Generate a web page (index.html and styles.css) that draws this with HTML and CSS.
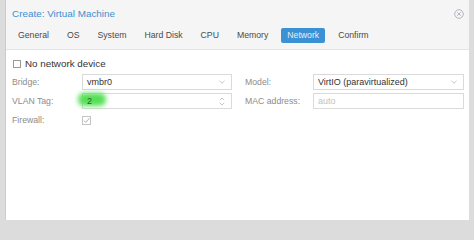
FILE: index.html
```html
<!DOCTYPE html>
<html>
<head>
<meta charset="utf-8">
<link rel="stylesheet" href="styles.css">
</head>
<body>
<div class="dialog">
  <div class="header">
    <div class="title-bar">
      <span class="title">Create: Virtual Machine</span>
      <svg class="close" width="10" height="10" viewBox="0 0 10 10">
        <circle cx="5" cy="5" r="4.3" fill="none" stroke="#a9b0b8" stroke-width="0.9"/>
        <path d="M3.3 3.3 L6.7 6.7 M6.7 3.3 L3.3 6.7" stroke="#a9b0b8" stroke-width="0.9" fill="none"/>
      </svg>
    </div>
    <div class="tabs">
      <span class="tab">General</span>
      <span class="tab">OS</span>
      <span class="tab">System</span>
      <span class="tab">Hard Disk</span>
      <span class="tab">CPU</span>
      <span class="tab">Memory</span>
      <span class="tab active">Network</span>
      <span class="tab">Confirm</span>
    </div>
  </div>
  <div class="content">
    <div class="nodev">
      <span class="cb"></span>
      <span class="nodev-label">No network device</span>
    </div>
    <div class="form">
      <div class="col left">
        <div class="row">
          <span class="label">Bridge:</span>
          <div class="field">
            <span class="value">vmbr0</span>
            <svg class="chev" width="6" height="4" viewBox="0 0 6 4"><path d="M0.5 0.8 L3 3.2 L5.5 0.8" fill="none" stroke="#b8b8b8" stroke-width="0.8"/></svg>
          </div>
        </div>
        <div class="row">
          <span class="label">VLAN Tag:</span>
          <div class="field">
            <span class="glow"></span>
            <span class="value vlan">2</span>
            <svg class="spin" width="6" height="9" viewBox="0 0 6 9"><path d="M0.8 3.2 L3 1 L5.2 3.2 M0.8 5.8 L3 8 L5.2 5.8" fill="none" stroke="#b8b8b8" stroke-width="0.8"/></svg>
          </div>
        </div>
        <div class="row">
          <span class="label">Firewall:</span>
          <span class="cb checked">
            <svg width="7" height="7" viewBox="0 0 7 7"><path d="M1 3.6 L2.8 5.4 L6.4 1.2" fill="none" stroke="#a8a8a8" stroke-width="0.9"/></svg>
          </span>
        </div>
      </div>
      <div class="col right">
        <div class="row">
          <span class="label">Model:</span>
          <div class="field">
            <span class="value">VirtIO (paravirtualized)</span>
            <svg class="chev" width="6" height="4" viewBox="0 0 6 4"><path d="M0.5 0.8 L3 3.2 L5.5 0.8" fill="none" stroke="#b8b8b8" stroke-width="0.8"/></svg>
          </div>
        </div>
        <div class="row">
          <span class="label">MAC address:</span>
          <div class="field">
            <span class="value placeholder">auto</span>
          </div>
        </div>
      </div>
    </div>
  </div>
</div>
</body>
</html>
```
FILE: styles.css
```css
html, body {
  margin: 0;
  padding: 0;
}
body {
  background: #dcdcdc;
  width: 474px;
  height: 223px;
  overflow: hidden;
  font-family: "Liberation Sans", Arial, sans-serif;
}
.dialog {
  margin-left: 5px;
  width: 464px;
  height: 220px;
  background: #ffffff;
  border-left: 1px solid #cccccc;
  box-sizing: border-box;
  display: flex;
  flex-direction: column;
}
.header {
  background: #f5f5f5;
  height: 50px;
  border-bottom: 1px solid #e4e4e4;
  box-sizing: border-box;
}
.title-bar {
  display: flex;
  align-items: center;
  justify-content: space-between;
  height: 27px;
  padding: 0 5px 0 6px;
}
.title {
  font-size: 9.9px;
  color: #3f8ecf;
}
.close {
  display: block;
}
.tabs {
  display: flex;
  align-items: center;
  gap: 8px;
  padding-left: 7px;
  margin-top: 1px;
  height: 15px;
}
.tab {
  font-size: 8.7px;
  color: #4a4a4a;
  padding: 0 5px;
  height: 15px;
  line-height: 15px;
  border-radius: 2px;
}
.tab.active {
  background: #3a91d4;
  color: #e3f0fa;
  padding: 0 6px;
}
.content {
  padding: 8px 5px 0 6px;
}
.nodev {
  display: flex;
  align-items: center;
  gap: 4px;
  height: 11px;
  padding-left: 1px;
}
.cb {
  width: 8px;
  height: 8px;
  border: 1px solid #9a9a9a;
  background: #fff;
  box-sizing: border-box;
  display: flex;
  align-items: center;
  justify-content: center;
  flex: none;
}
.cb.checked {
  width: 9px;
  height: 9px;
  border-color: #c4c4c4;
}
.cb svg {
  display: block;
}
.nodev-label {
  font-size: 9.8px;
  color: #333;
}
.form {
  display: flex;
  gap: 13px;
  margin-top: 5px;
}
.col {
  display: flex;
  flex-direction: column;
  gap: 3px;
}
.row {
  display: flex;
  align-items: center;
  height: 16px;
}
.label {
  font-size: 8.7px;
  color: #8c8c8c;
  flex: none;
}
.left .label {
  width: 70px;
}
.right .label {
  width: 68px;
}
.left .field {
  width: 150px;
}
.right .field {
  width: 151px;
}
.field {
  position: relative;
  height: 16px;
  border: 1px solid #dadada;
  box-sizing: border-box;
  background: #fff;
  display: flex;
  align-items: center;
  justify-content: space-between;
  padding: 0 6px 0 4px;
}
.value {
  font-size: 9px;
  color: #333;
  position: relative;
}
.value.vlan {
  color: #2d5f2d;
}
.placeholder {
  color: #c2c2c2;
}
.chev, .spin {
  display: block;
}
.glow {
  position: absolute;
  left: -5px;
  top: -1px;
  width: 28px;
  height: 13px;
  border-radius: 6px;
  background: #55e055;
  filter: blur(2.5px);
}
```
